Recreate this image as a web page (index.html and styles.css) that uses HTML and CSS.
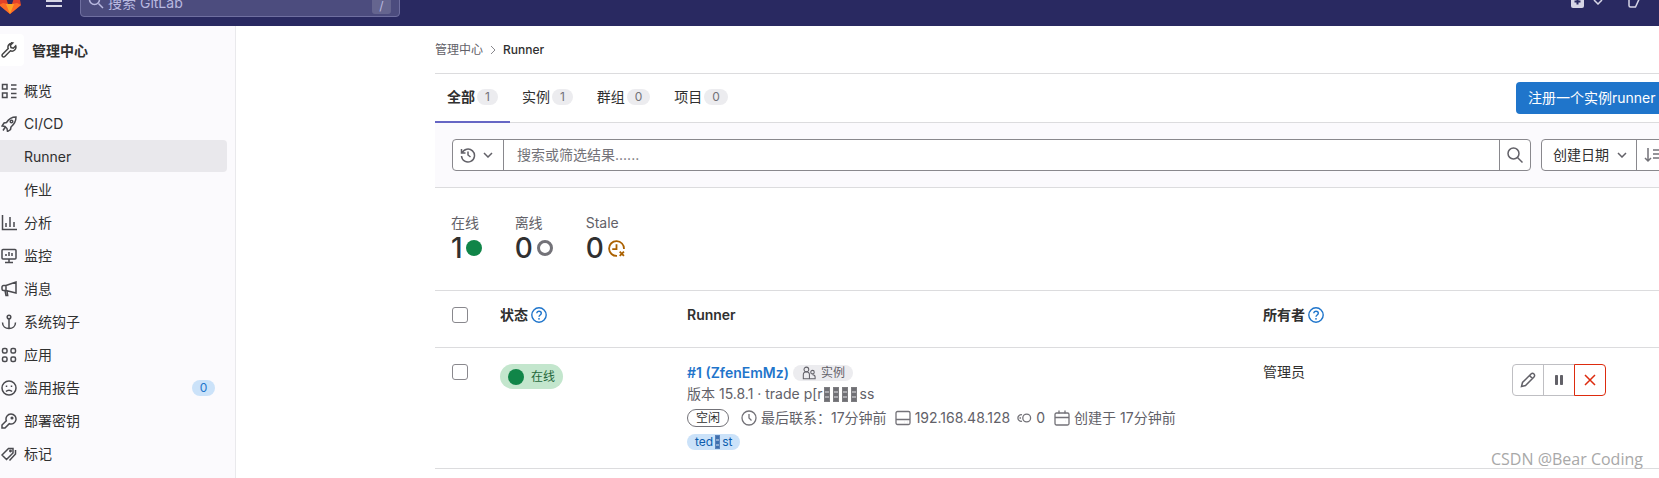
FILE: index.html
```html
<!DOCTYPE html>
<html lang="zh-CN">
<head>
  <meta charset="UTF-8" />
  <meta name="viewport" content="width=device-width, initial-scale=1" />
  <title>Runner · 管理中心 · GitLab</title>
  <link rel="stylesheet" href="styles.css">
</head>
<body>
  <header class="topbar">
    <svg class="logo" viewBox="0 0 24 24" aria-hidden="true">
      <path fill="#e24329" d="M12 23 1 14 3 4h4l3 9h4l3-9h4l2 10z"/>
      <path fill="#fc6d26" d="M12 23 1 14l4-2 5 1z"/>
      <path fill="#fc6d26" d="m12 23 11-9-4-2-5 1z"/>
      <path fill="#fca326" d="m12 23-4-10h8z"/>
    </svg>
    <svg class="burger" viewBox="0 0 16 7" aria-hidden="true"><path d="M0 1h16M0 6h16"/></svg>
    <div class="search">
      <svg class="ic search-ic" viewBox="0 0 16 16" aria-hidden="true"><circle cx="6.5" cy="6.5" r="5"/><path d="m10.5 10.5 4.5 4.5"/></svg>
      <span>搜索 GitLab</span>
      <kbd>/</kbd>
    </div>
    <div class="top-right">
      <svg class="plus-box" viewBox="0 0 13 13" aria-hidden="true"><rect width="13" height="13" rx="2" fill="#d6d5e6"/><path d="M6.500 3.500v6M3.500 6.500h6" stroke="#292961" stroke-width="2"/></svg>
      <svg class="ic top-chev" viewBox="0 0 10 6" aria-hidden="true"><path d="m1 1 4 4 4-4"/></svg>
      <svg class="ic top-doc" viewBox="0 0 14 16" aria-hidden="true"><path d="M1 2v11.500a1.500 1.500 0 0 0 1.500 1.500h5l5.500-12V2"/></svg>
    </div>
  </header>

  <div class="layout">
    <aside class="sidebar">
      <div class="side-title">
        <span class="side-tile">
          <svg class="ic" viewBox="0 0 16 16" aria-hidden="true"><path d="M10.800 1.200a4 4 0 0 0-3.600 5.400L1.500 12.200a1.600 1.600 0 0 0 2.300 2.300l5.600-5.700a4 4 0 0 0 5.300-5l-2.400 2.400-2.300-.6-.6-2.300 2.400-2.400a4 4 0 0 0-1-.1z"/></svg>
        </span>
        <strong>管理中心</strong>
      </div>
      <ul class="side-nav">
        <li><svg class="ic" viewBox="0 0 16 16" aria-hidden="true"><rect x="1.500" y="1.500" width="4.500" height="4.500"/><rect x="1.500" y="10" width="4.500" height="4.500"/><path d="M10 2h5.500M10 6h5.500M10 10.500h5.500M10 14.500h5.500"/></svg>概览</li>
        <li><svg class="ic" viewBox="0 0 16 16" aria-hidden="true"><path d="M15 1c-4 0-7 1.500-9.500 5.500L3 7 1 10l3 .5 2 2 .5 3 3-2 .5-2.500C13.500 8 15 5 15 1zM4 11.500 2 14.500"/><circle cx="10.500" cy="5.500" r="1.300"/></svg>CI/CD</li>
        <li class="active">Runner</li>
        <li>作业</li>
        <li><svg class="ic" viewBox="0 0 16 16" aria-hidden="true"><path d="M1.500 0v14.500H16M5 8v4M9 2v10M13 7v5"/></svg>分析</li>
        <li><svg class="ic" viewBox="0 0 16 16" aria-hidden="true"><rect x="1" y="1.500" width="14" height="9.500" rx="1"/><path d="M5 8V6M8 8V4M11 8V5M8 11v3M4 14.500h8"/></svg>监控</li>
        <li><svg class="ic" viewBox="0 0 16 16" aria-hidden="true"><path d="M15 1v11L5 9.500H2.500A1.500 1.500 0 0 1 1 8V6a1.500 1.500 0 0 1 1.500-1.500H5zM5 4.500v5M6 10l.7 4.500h-1.700L4 9.500"/></svg>消息</li>
        <li><svg class="ic" viewBox="0 0 16 16" aria-hidden="true"><circle cx="8" cy="3" r="1.800"/><path d="M8 5v9.500M1.500 8.500c0 4 3 6 6.500 6s6.500-2 6.500-6"/></svg>系统钩子</li>
        <li><svg class="ic" viewBox="0 0 16 16" aria-hidden="true"><rect x="1.500" y="1.500" width="4.500" height="4.500" rx="1.500"/><rect x="10" y="1.500" width="4.500" height="4.500" rx="1.500"/><rect x="1.500" y="10" width="4.500" height="4.500" rx="1.500"/><rect x="10" y="10" width="4.500" height="4.500" rx="1.500"/></svg>应用</li>
        <li><svg class="ic" viewBox="0 0 16 16" aria-hidden="true"><circle cx="8" cy="8" r="7"/><path d="M5 11.500c1.500-1.700 4.500-1.700 6 0M5.500 5.500v1.500M10.500 5.500v1.500"/></svg>滥用报告<span class="side-count">0</span></li>
        <li><svg class="ic" viewBox="0 0 16 16" aria-hidden="true"><path d="M10 1a5 5 0 0 0-4.700 6.700L1 12v3h3l4.300-4.300A5 5 0 1 0 10 1z"/><circle cx="11" cy="5" r=".8"/></svg>部署密钥</li>
        <li><svg class="ic" viewBox="0 0 16 16" aria-hidden="true"><path d="M1 9 7.500 2.500H12V7l-6.500 6.500zM14.500 4v4L8.500 14.500"/><circle cx="9.500" cy="5" r=".7"/></svg>标记</li>
      </ul>
    </aside>

    <main class="content">
      <nav class="crumbs"><span>管理中心</span><svg class="ic crumb-sep" viewBox="0 0 6 10" aria-hidden="true"><path d="m1 1 4 4-4 4"/></svg><b>Runner</b></nav>

      <div class="tabs-row">
        <ul class="tabs">
          <li class="on">全部<span class="count">1</span></li>
          <li>实例<span class="count">1</span></li>
          <li>群组<span class="count">0</span></li>
          <li>项目<span class="count">0</span></li>
        </ul>
        <button class="btn-primary" type="button">注册一个实例runner</button>
      </div>

      <div class="filter-bar">
        <div class="filter">
          <div class="filter-history">
            <svg class="ic" viewBox="0 0 16 16" aria-hidden="true"><path d="M1.500 2v4h4M2 6a6.500 6.500 0 1 1-.5 3M8 4.500V8l2.500 2"/></svg>
            <svg class="ic chev" viewBox="0 0 10 6" aria-hidden="true"><path d="m1 1 4 4 4-4"/></svg>
          </div>
          <div class="filter-input">搜索或筛选结果......</div>
          <div class="filter-go">
            <svg class="ic" viewBox="0 0 16 16" aria-hidden="true"><circle cx="6.500" cy="6.500" r="5.500"/><path d="m10.500 10.500 5 5"/></svg>
          </div>
        </div>
        <div class="sort">
          <div class="sort-key">创建日期<svg class="ic chev" viewBox="0 0 10 6" aria-hidden="true"><path d="m1 1 4 4 4-4"/></svg></div>
          <div class="sort-dir"><svg class="ic" viewBox="0 0 16 16" aria-hidden="true"><path d="M4 1v13M1 11l3 3 3-3M9 3h7M9 7h7M9 11h7"/></svg></div>
        </div>
      </div>

      <section class="stats">
        <div class="stat">
          <span class="stat-label">在线</span>
          <span class="stat-num">1<i class="dot-online"></i></span>
        </div>
        <div class="stat">
          <span class="stat-label">离线</span>
          <span class="stat-num">0<i class="dot-offline"></i></span>
        </div>
        <div class="stat">
          <span class="stat-label">Stale</span>
          <span class="stat-num">0<svg class="ic stale-ic" viewBox="0 0 16 16" aria-hidden="true"><path d="M8.500 15A7 7 0 1 1 15 8.500M8 4v4.500H4M11 11l4 4M15 11l-4 4"/></svg></span>
        </div>
      </section>

      <div class="tbl-row tbl-head">
        <span class="check"></span>
        <span class="th">状态<svg class="help" viewBox="0 0 16 16" aria-hidden="true"><circle cx="8" cy="8" r="7.200"/><path d="M5.800 6.300C5.800 5 6.800 4.200 8 4.200s2.300.8 2.300 2c0 1.800-2.300 1.800-2.300 3.600"/><circle class="help-dot" cx="8" cy="11.800" r=".9"/></svg></span>
        <span class="th">Runner</span>
        <span class="th">所有者<svg class="help" viewBox="0 0 16 16" aria-hidden="true"><circle cx="8" cy="8" r="7.200"/><path d="M5.800 6.300C5.800 5 6.800 4.200 8 4.200s2.300.8 2.300 2c0 1.800-2.300 1.800-2.300 3.600"/><circle class="help-dot" cx="8" cy="11.800" r=".9"/></svg></span>
      </div>

      <div class="tbl-row tbl-body">
        <span class="check"></span>
        <div><span class="status"><i></i>在线</span></div>
        <div class="runner">
          <div class="runner-name">
            <a href="#">#1 (ZfenEmMz)</a>
            <span class="type-pill"><svg class="ic" viewBox="0 0 16 16" aria-hidden="true"><circle cx="5" cy="4" r="2.700"/><path d="M1.500 14.500V10a3.500 3.500 0 0 1 7 0v4.500z"/><circle cx="12" cy="7" r="2"/><path d="M9 14.500h6v-2c0-1.500-1-2.500-3-2.500"/></svg>实例</span>
          </div>
          <div class="runner-version">版本 15.8.1 · trade p[r<i class="tofu"></i><i class="tofu"></i><i class="tofu"></i><i class="tofu"></i>ss</div>
          <div class="runner-meta">
            <span class="idle">空闲</span>
            <span class="meta"><svg class="ic" viewBox="0 0 16 16" aria-hidden="true"><circle cx="8" cy="8" r="7"/><path d="M8 4v4l2.500 2.500"/></svg>最后联系：17分钟前</span>
            <span class="meta meta-ip"><svg class="ic" viewBox="0 0 16 16" aria-hidden="true"><rect x="1" y="1.500" width="14" height="13" rx="1.500"/><path d="M1 9.500h14M9 12h.1M12 12h.1"/></svg>192.168.48.128</span>
            <span class="meta meta-jobs"><svg class="ic" viewBox="0 0 16 16" aria-hidden="true"><path d="M6 4.800A3.300 3.300 0 1 0 6 11.200M3.500 8H5"/><circle cx="10.700" cy="8" r="3.900"/></svg>0</span>
            <span class="meta"><svg class="ic" viewBox="0 0 16 16" aria-hidden="true"><rect x="1" y="3" width="14" height="12" rx="1.500"/><path d="M1 7.500h14M5 .500v3M11 .500v3M11 11h.1"/></svg>创建于 17分钟前</span>
          </div>
          <span class="tag">ted<i class="tofu tofu-blue"></i>st</span>
        </div>
        <div class="owner">管理员</div>
        <div class="actions">
          <button type="button"><svg class="ic" viewBox="0 0 16 16" aria-hidden="true"><path d="M1.500 14.500 2.500 10.500 11 2a1.500 1.500 0 0 1 3 3l-8.500 8.500zM9.500 3.500l3 3"/></svg></button>
          <button type="button"><svg class="pause" viewBox="0 0 16 16" aria-hidden="true"><rect x="4" y="3" width="3" height="10" rx=".8"/><rect x="9" y="3" width="3" height="10" rx=".8"/></svg></button>
          <button class="danger" type="button"><svg class="ic" viewBox="0 0 16 16" aria-hidden="true"><path d="m3 3 10 10M13 3 3 13"/></svg></button>
        </div>
      </div>
    </main>
  </div>

  <div class="watermark">CSDN @Bear Coding</div>
</body>
</html>
```

FILE: styles.css
```css
* { box-sizing: border-box; margin: 0; padding: 0; }
html, body {
  height: 478px;
  overflow: hidden;
}
body {
  font-family: Inter, "Noto Sans CJK SC", sans-serif;
  font-size: 14px;
  line-height: 20px;
  color: #303030;
  background: white;
}
ul { list-style: none; }
i { font-style: normal; }
.ic {
  width: 16px;
  height: 16px;
  flex: none;
  fill: none;
  stroke: currentColor;
  stroke-width: 1.5;
}

/* top bar, cut off by the top of the picture */
.topbar {
  height: 26px;
  background: #292961;
  display: flex;
  align-items: flex-end;
  overflow: hidden;
  color: #d6d5e6;
}
.logo {
  width: 24px;
  height: 24px;
  flex: none;
  margin: 0 24px 11px -2px;
}
.burger {
  width: 16px;
  height: 7px;
  flex: none;
  margin: 0 18px 19px 0;
  fill: none;
  stroke: #d6d5e6;
  stroke-width: 2;
}
.search {
  width: 320px;
  height: 28px;
  flex: none;
  margin-bottom: 9px;
  padding: 0 8px 0 7px;
  display: flex;
  align-items: center;
  gap: 4px;
  background: #4c4c7e;
  border: 1px solid #6f6fa0;
  border-radius: 4px;
  color: #b9b9e0;
}
.search kbd {
  margin: -3px 0 0 auto;
  width: 19px;
  height: 24px;
  padding-top: 8px;
  background: #65658f;
  border-radius: 3px;
  font: 12px Inter, sans-serif;
  text-align: center;
}
.search-ic { margin-top: -4px; }
.top-right {
  margin-left: auto;
  display: flex;
  align-items: flex-end;
  padding-right: 17px;
}
.plus-box {
  width: 13px;
  height: 13px;
  margin-bottom: 18px;
}
.top-chev {
  width: 10px;
  height: 6px;
  margin: 0 25px 21px 9px;
}
.top-doc {
  width: 14px;
  height: 16px;
  margin-bottom: 18px;
}

.layout { display: flex; }

/* sidebar */
.sidebar {
  width: 236px;
  height: 452px;
  flex: none;
  padding-top: 8px;
  background: #fbfafd;
  border-right: 1px solid #e9e9ec;
  overflow: hidden;
}
.side-title {
  height: 32px;
  margin-bottom: 8px;
  display: flex;
  align-items: center;
  gap: 8px;
  font-size: 14px;
}
.side-title strong { font-weight: 600; padding-top: 1px; }
.side-tile {
  width: 24px;
  height: 32px;
  padding-left: 1px;
  display: flex;
  align-items: center;
  background: white;
  border-radius: 0 4px 4px 0;
  color: #444;
}
.side-nav li {
  width: 227px;
  height: 32px;
  margin-bottom: 1px;
  padding: 2px 12px 0 24px;
  display: flex;
  align-items: center;
  border-radius: 0 4px 4px 0;
}
.side-nav li .ic {
  margin: 0 7px 0 -23px;
  color: #4a4a4f;
}
.side-nav li.active { background: #e9e8ec; }
.side-count {
  margin-left: auto;
  width: 23px;
  height: 16px;
  border-radius: 8px;
  background: #cbe2f9;
  color: #1f75cb;
  font-size: 12px;
  line-height: 16px;
  text-align: center;
}

/* main column */
.content {
  flex: 1;
  min-width: 0;
  padding-left: 199px;
}
.crumbs {
  height: 48px;
  padding-top: 1px;
  display: flex;
  align-items: center;
  font-size: 12px;
  color: #626168;
  border-bottom: 1px solid #dcdcde;
}
.crumbs b { font-weight: 500; color: #303030; }
.crumb-sep {
  width: 6px;
  height: 10px;
  margin: 0 7px;
  stroke: #89888d;
  stroke-width: 1;
}

.tabs-row {
  height: 49px;
  display: flex;
  justify-content: space-between;
  border-bottom: 1px solid #dcdcde;
}
.tabs { display: flex; }
.tabs li {
  height: 49px;
  padding: 0 12px 4px;
  display: flex;
  align-items: center;
  gap: 2px;
}
.tabs li.on {
  padding: 0 12px 2px;
  font-weight: 600;
  border-bottom: 2px solid #6666c4;
}
.count {
  min-width: 20px;
  height: 16px;
  padding: 0 8px;
  border-radius: 8px;
  background: #ececef;
  color: #737278;
  font-size: 12px;
  font-weight: 400;
  line-height: 16px;
  text-align: center;
}
.btn-primary {
  width: 160px;
  height: 32px;
  flex: none;
  margin: 8px -17px 0 0;
  padding: 0 0 0 12px;
  border: none;
  border-radius: 4px;
  background: #1f75cb;
  color: white;
  font: 14px/20px Inter, "Noto Sans CJK SC", sans-serif;
  text-align: left;
}

.filter-bar {
  height: 65px;
  padding: 16px 0 16px 17px;
  display: flex;
  gap: 10px;
  background: #fbfafd;
  border-bottom: 1px solid #dcdcde;
}
.filter {
  flex: 1;
  min-width: 0;
  height: 32px;
  display: flex;
  background: white;
  border: 1px solid #89888d;
  border-radius: 4px;
}
.filter-history {
  width: 51px;
  padding-left: 7px;
  display: flex;
  align-items: center;
  gap: 7px;
  color: #626168;
  border-right: 1px solid #89888d;
}
.chev {
  width: 10px;
  height: 6px;
  color: #626168;
}
.filter-input {
  flex: 1;
  padding-left: 13px;
  line-height: 30px;
  color: #737278;
}
.filter-go {
  width: 31px;
  display: flex;
  align-items: center;
  justify-content: center;
  color: #626168;
  border-left: 1px solid #89888d;
}
.sort {
  width: 135px;
  height: 32px;
  flex: none;
  margin-right: -17px;
  display: flex;
  background: white;
  border: 1px solid #89888d;
  border-radius: 4px 0 0 4px;
}
.sort-key {
  width: 95px;
  flex: none;
  padding-left: 11px;
  display: flex;
  align-items: center;
  gap: 8px;
  border-right: 1px solid #89888d;
}
.sort-dir {
  padding-left: 7px;
  display: flex;
  align-items: center;
  color: #737278;
}

.stats {
  height: 103px;
  padding: 25px 0 0 16px;
  display: flex;
  gap: 33px;
  border-bottom: 1px solid #dcdcde;
}
.stat { display: flex; flex-direction: column; }
.stat-label { color: #626168; }
.stat-num {
  display: flex;
  align-items: center;
  gap: 3px;
  font-size: 28px;
  line-height: 30px;
  font-weight: 500;
}
.dot-online, .dot-offline {
  width: 16px;
  height: 16px;
  border-radius: 50%;
}
.dot-online { background: #108548; }
.dot-offline { border: 3px solid #737278; margin-left: 1px; }
.stale-ic {
  width: 17px;
  height: 17px;
  margin-left: 1px;
  color: #ab6100;
  stroke-width: 1.7;
}

/* table */
.tbl-row {
  display: grid;
  grid-template-columns: 48px 187px 576px 249px 94px;
  padding-left: 17px;
  border-bottom: 1px solid #dcdcde;
}
.tbl-head {
  height: 57px;
  padding-top: 16px;
}
.tbl-body {
  height: 121px;
  padding-top: 16px;
}
.check {
  width: 16px;
  height: 16px;
  border: 1px solid #89888d;
  border-radius: 3px;
  background: white;
}
.th {
  display: flex;
  gap: 3px;
  align-items: center;
  height: 16px;
  font-weight: 600;
}
.help {
  width: 16px;
  height: 16px;
  fill: none;
  stroke: #1f75cb;
  stroke-width: 1.4;
}
.help-dot { fill: #1f75cb; stroke: none; }
.status {
  width: 63px;
  height: 25px;
  padding-left: 8px;
  display: flex;
  align-items: center;
  gap: 7px;
  border-radius: 13px;
  background: #c3e6cd;
  color: #24663b;
  font-size: 12px;
}
.status i {
  width: 16px;
  height: 16px;
  border-radius: 50%;
  background: #108548;
}
.runner-name {
  height: 18px;
  display: flex;
  align-items: center;
  gap: 4px;
}
.runner-name a {
  color: #1f75cb;
  font-weight: 600;
  text-decoration: none;
}
.type-pill {
  height: 16px;
  padding: 0 8px 0 9px;
  display: flex;
  align-items: center;
  gap: 5px;
  border-radius: 8px;
  background: #ececef;
  color: #626168;
  font-size: 12px;
}
.type-pill .ic { width: 14px; height: 14px; stroke-width: 1.2; }
.runner-version {
  height: 20px;
  margin-top: 2px;
  display: flex;
  align-items: center;
  color: #626168;
}
.tofu {
  width: 6px;
  height: 15px;
  margin-right: 3px;
  background: repeating-linear-gradient(#6f6f74 0 3px, #a9a9ad 3px 5px);
  border: 1px solid #7d7d80;
}
.tofu:first-of-type { margin-left: 1px; }
.runner-meta {
  height: 18px;
  margin-top: 5px;
  display: flex;
  align-items: center;
  gap: 9px;
  color: #626168;
}
.idle {
  width: 42px;
  height: 18px;
  margin-right: 3px;
  border: 1px solid #737278;
  border-radius: 9px;
  color: #303030;
  font-size: 12px;
  line-height: 16px;
  text-align: center;
}
.meta {
  display: flex;
  align-items: center;
  gap: 4px;
  white-space: nowrap;
}
.meta .ic { color: #737278; stroke-width: 1.3; }
.meta-ip { margin-left: -1px; }
.meta-jobs { margin-left: -3px; }
.tag {
  width: 53px;
  height: 16px;
  margin-top: 7px;
  padding-left: 8px;
  display: flex;
  align-items: center;
  border-radius: 8px;
  background: #cbe2f9;
  color: #0b5cad;
  font-size: 12px;
}
.tofu-blue {
  width: 5px;
  height: 14px;
  margin: 0 2px;
  background: repeating-linear-gradient(#3f6fae 0 3px, #8aa9d0 3px 5px);
  border-color: #5a83ba;
}
.tag .tofu:first-of-type { margin-left: 2px; }
.owner { margin-top: -2px; }
.actions {
  display: flex;
  height: 32px;
}
.actions button {
  width: 32px;
  height: 32px;
  flex: none;
  margin-right: -1px;
  display: flex;
  align-items: center;
  justify-content: center;
  background: white;
  border: 1px solid #bfbfc3;
  color: #626168;
}
.actions button:first-child { border-radius: 4px 0 0 4px; }
.actions button.danger {
  position: relative;
  border-color: #dd2b0e;
  border-radius: 0 4px 4px 0;
  color: #dd2b0e;
}
.pause { width: 16px; height: 16px; fill: #626168; }

.watermark {
  position: absolute;
  left: 1491px;
  top: 448px;
  width: 155px;
  font-family: "Open Sans", sans-serif;
  font-size: 16px;
  line-height: 22px;
  white-space: nowrap;
  color: #a8a8a8;
}
```
